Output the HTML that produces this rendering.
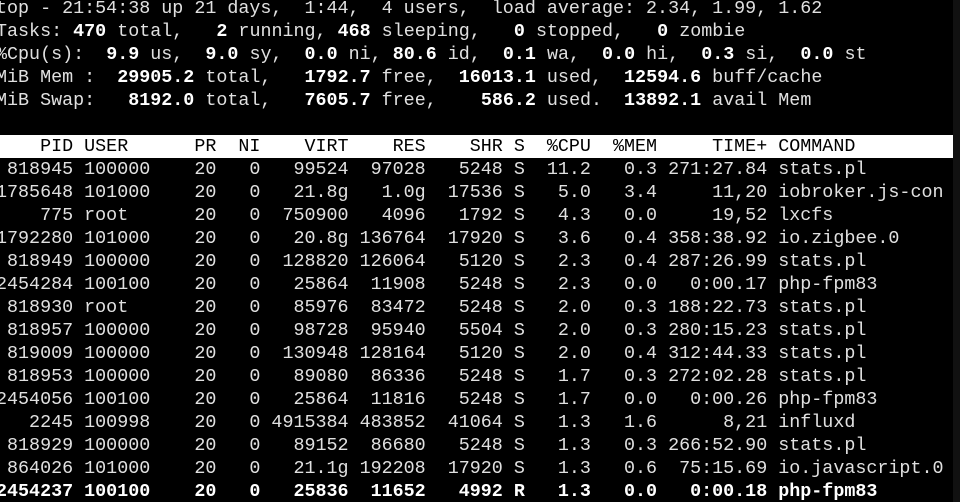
<!DOCTYPE html>
<html><head><meta charset="utf-8"><style>
html,body{margin:0;padding:0;background:#000;width:960px;height:502px;overflow:hidden;position:relative}
.strip{position:absolute;left:953px;top:0;width:7px;height:502px;background:#111}
pre{position:absolute;left:-4px;top:-3.5px;margin:0;font-family:"Liberation Mono",monospace;font-size:18.36px;line-height:23px;color:#e0e0e0;white-space:pre}
b{color:#fff;font-weight:bold}
.h{display:inline-block;background:#fff;color:#000;width:957px}
</style></head><body><div class="strip"></div><pre>top - 21:54:38 up 21 days,  1:44,  4 users,  load average: 2.34, 1.99, 1.62
Tasks: <b>470</b> total,   <b>2</b> running, <b>468</b> sleeping,   <b>0</b> stopped,   <b>0</b> zombie
%Cpu(s):  <b>9.9</b> us,  <b>9.0</b> sy,  <b>0.0</b> ni, <b>80.6</b> id,  <b>0.1</b> wa,  <b>0.0</b> hi,  <b>0.3</b> si,  <b>0.0</b> st
MiB Mem :  <b>29905.2</b> total,   <b>1792.7</b> free,  <b>16013.1</b> used,  <b>12594.6</b> buff/cache
MiB Swap:   <b>8192.0</b> total,   <b>7605.7</b> free,    <b>586.2</b> used.  <b>13892.1</b> avail Mem

<span class="h">    PID USER      PR  NI    VIRT    RES    SHR S  %CPU  %MEM     TIME+ COMMAND</span>
 818945 100000    20   0   99524  97028   5248 S  11.2   0.3 271:27.84 stats.pl
1785648 101000    20   0   21.8g   1.0g  17536 S   5.0   3.4     11,20 iobroker.js-con
    775 root      20   0  750900   4096   1792 S   4.3   0.0     19,52 lxcfs
1792280 101000    20   0   20.8g 136764  17920 S   3.6   0.4 358:38.92 io.zigbee.0
 818949 100000    20   0  128820 126064   5120 S   2.3   0.4 287:26.99 stats.pl
2454284 100100    20   0   25864  11908   5248 S   2.3   0.0   0:00.17 php-fpm83
 818930 root      20   0   85976  83472   5248 S   2.0   0.3 188:22.73 stats.pl
 818957 100000    20   0   98728  95940   5504 S   2.0   0.3 280:15.23 stats.pl
 819009 100000    20   0  130948 128164   5120 S   2.0   0.4 312:44.33 stats.pl
 818953 100000    20   0   89080  86336   5248 S   1.7   0.3 272:02.28 stats.pl
2454056 100100    20   0   25864  11816   5248 S   1.7   0.0   0:00.26 php-fpm83
   2245 100998    20   0 4915384 483852  41064 S   1.3   1.6      8,21 influxd
 818929 100000    20   0   89152  86680   5248 S   1.3   0.3 266:52.90 stats.pl
 864026 101000    20   0   21.1g 192208  17920 S   1.3   0.6  75:15.69 io.javascript.0
<b>2454237 100100    20   0   25836  11652   4992 R   1.3   0.0   0:00.18 php-fpm83</b></pre></body></html>
